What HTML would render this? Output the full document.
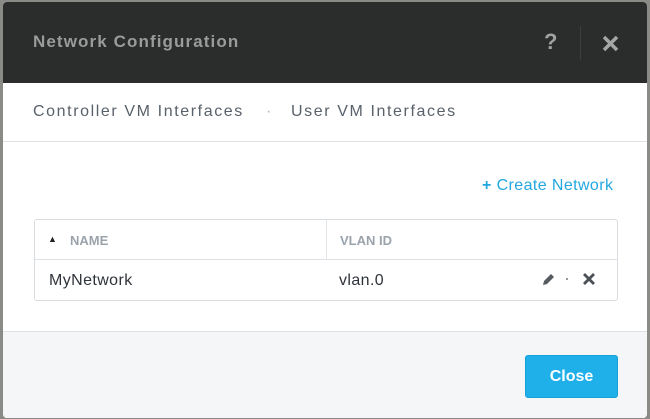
<!DOCTYPE html>
<html><head><style>
*{margin:0;padding:0;box-sizing:border-box}
body{width:650px;height:419px;background:#8a8a86;position:relative;overflow:hidden;font-family:"Liberation Sans",sans-serif}
.m{position:absolute;left:3px;top:2px;width:644px;height:416px;background:#fff;border-radius:4px;overflow:hidden}
.h{position:absolute;left:0;top:0;width:644px;height:81px;background:#2b2c2c}
.h .t{position:absolute;left:30px;top:30px;color:#9a9b9b;font-weight:bold;font-size:17px;letter-spacing:1.1px}
.q{position:absolute;left:541px;top:27px;color:#a0a1a1;font-weight:bold;font-size:22px}
.sep{position:absolute;left:577px;top:24px;width:1px;height:34px;background:#3c3d3d}
.tabs{position:absolute;top:101px;font-size:16px;color:#59616a;letter-spacing:1.6px}
.line{position:absolute;left:0;width:644px;height:1px;background:#dde1e5}
.cn{position:absolute;left:479px;top:175px;color:#22a7e0;font-size:16px;letter-spacing:0.4px}
.tb{position:absolute;left:31px;top:217px;width:584px;height:82px;border:1px solid #d8dde2;border-radius:3px}
.th{position:absolute;top:13px;font-size:13px;color:#9aa3ac;font-weight:bold}
.td{position:absolute;top:52px;font-size:16px;color:#2f343a;letter-spacing:0.4px}
.f{position:absolute;left:0;top:329px;width:644px;height:87px;background:#f5f6f8;border-top:1px solid #dde1e5}
.btn{position:absolute;left:522px;top:23px;width:93px;height:43px;background:#1fb0ea;border-radius:3px;border:1px solid #15a0d8;color:#fff;font-weight:bold;font-size:16px;text-align:center;line-height:41px}
</style></head><body>
<div class="m">
<div class="h"><div class="t">Network Configuration</div><div class="q">?</div><div class="sep"></div>
<svg style="position:absolute;left:599px;top:33px" width="17" height="17"><path d="M2 2L15 15M15 2L2 15" stroke="#a5a6a6" stroke-width="3.5"/></svg></div>
<div class="tabs" style="left:30px">Controller VM Interfaces</div>
<div class="tabs" style="left:263px;color:#b0b6bc">·</div>
<div class="tabs" style="left:288px">User VM Interfaces</div>
<div class="line" style="top:139px"></div>
<div class="cn"><b>+</b> Create Network</div>
<div class="tb">
<div style="position:absolute;left:0;top:39px;width:582px;height:1px;background:#dde1e5"></div>
<div style="position:absolute;left:291px;top:0;width:1px;height:39px;background:#e4e7ea"></div>
<div class="th" style="left:13px;color:#222;font-size:9px;top:14px">▲</div>
<div class="th" style="left:35px">NAME</div>
<div class="th" style="left:305px">VLAN ID</div>
<div class="td" style="left:14px">MyNetwork</div>
<div class="td" style="left:304px">vlan.0</div>
<svg style="position:absolute;left:507px;top:52px" width="14" height="14"><path d="M1 13L2 9L9 2L12 5L5 12Z" fill="#555b61"/></svg>
<div style="position:absolute;left:531px;top:58px;width:2px;height:2px;background:#999"></div>
<svg style="position:absolute;left:547px;top:52px" width="14" height="14"><path d="M2 2L12 12M12 2L2 12" stroke="#4a5056" stroke-width="2.8"/></svg>
</div>
<div class="f"><div class="btn">Close</div></div>
</div>
</body></html>
